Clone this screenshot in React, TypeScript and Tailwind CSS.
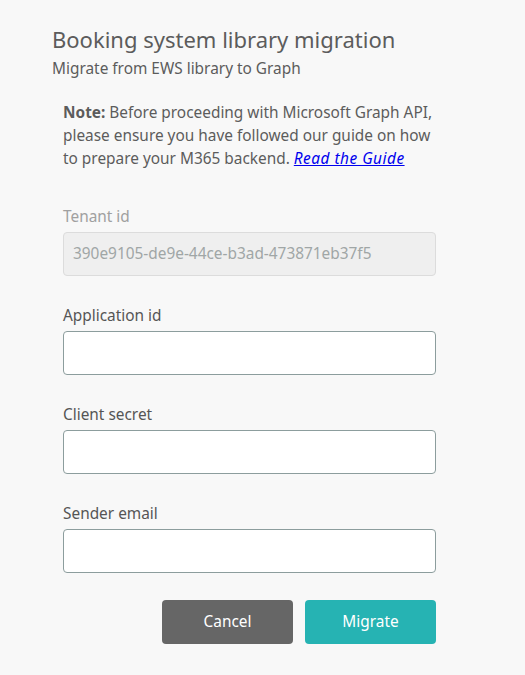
export default function App() {
  const fields = ['Application id', 'Client secret', 'Sender email']
  return (
    <div className="min-h-[675px] w-[525px] bg-[#f8f8f8] font-['Noto_Sans',sans-serif] text-[#555]">
      <div className="pl-[52px] pt-[24px]">
        <h1 className="text-[22px] leading-[30px] text-[#5c5c5c]">Booking system library migration</h1>
        <p className="mt-[5px] text-[15.4px] leading-[20px] text-[#5c5c5c]">Migrate from EWS library to Graph</p>

        <div className="mt-[22px] ml-[11px] w-[373px]">
          <p className="text-[15.4px] leading-[23px] text-[#5c5c5c]">
            <span className="font-bold">Note:</span> Before proceeding with Microsoft Graph API, please ensure you have
            followed our guide on how to prepare your M365 backend.{' '}
            <a href="#" className="italic tracking-[0.5px] text-[#0000ee] underline">
              Read the Guide
            </a>
          </p>

          <div className="mt-[36px]">
            <label className="block text-[15.4px] leading-[22px] text-[#a0a0a0]">Tenant id</label>
            <div className="mt-[4px] flex h-[44px] items-center rounded-[4px] border border-[#dcdcdc] bg-[#efefef] px-[9px] text-[15.4px] text-[#a0a6a6]">
              390e9105-de9e-44ce-b3ad-473871eb37f5
            </div>
          </div>

          {fields.map((f) => (
            <div key={f} className="mt-[29px]">
              <label className="block text-[15.4px] leading-[22px] text-[#555]">{f}</label>
              <input className="mt-[4px] block h-[44px] w-full rounded-[4px] border border-[#8c9d9d] bg-white px-[9px] text-[15px] outline-none" />
            </div>
          ))}

          <div className="mt-[27px] flex justify-end gap-[12px]">
            <button className="h-[44px] w-[131px] rounded-[4px] bg-[#666] text-[15.4px] text-white">Cancel</button>
            <button className="h-[44px] w-[131px] rounded-[4px] bg-[#26b3b3] text-[15.4px] text-white">Migrate</button>
          </div>
        </div>
      </div>
    </div>
  )
}
